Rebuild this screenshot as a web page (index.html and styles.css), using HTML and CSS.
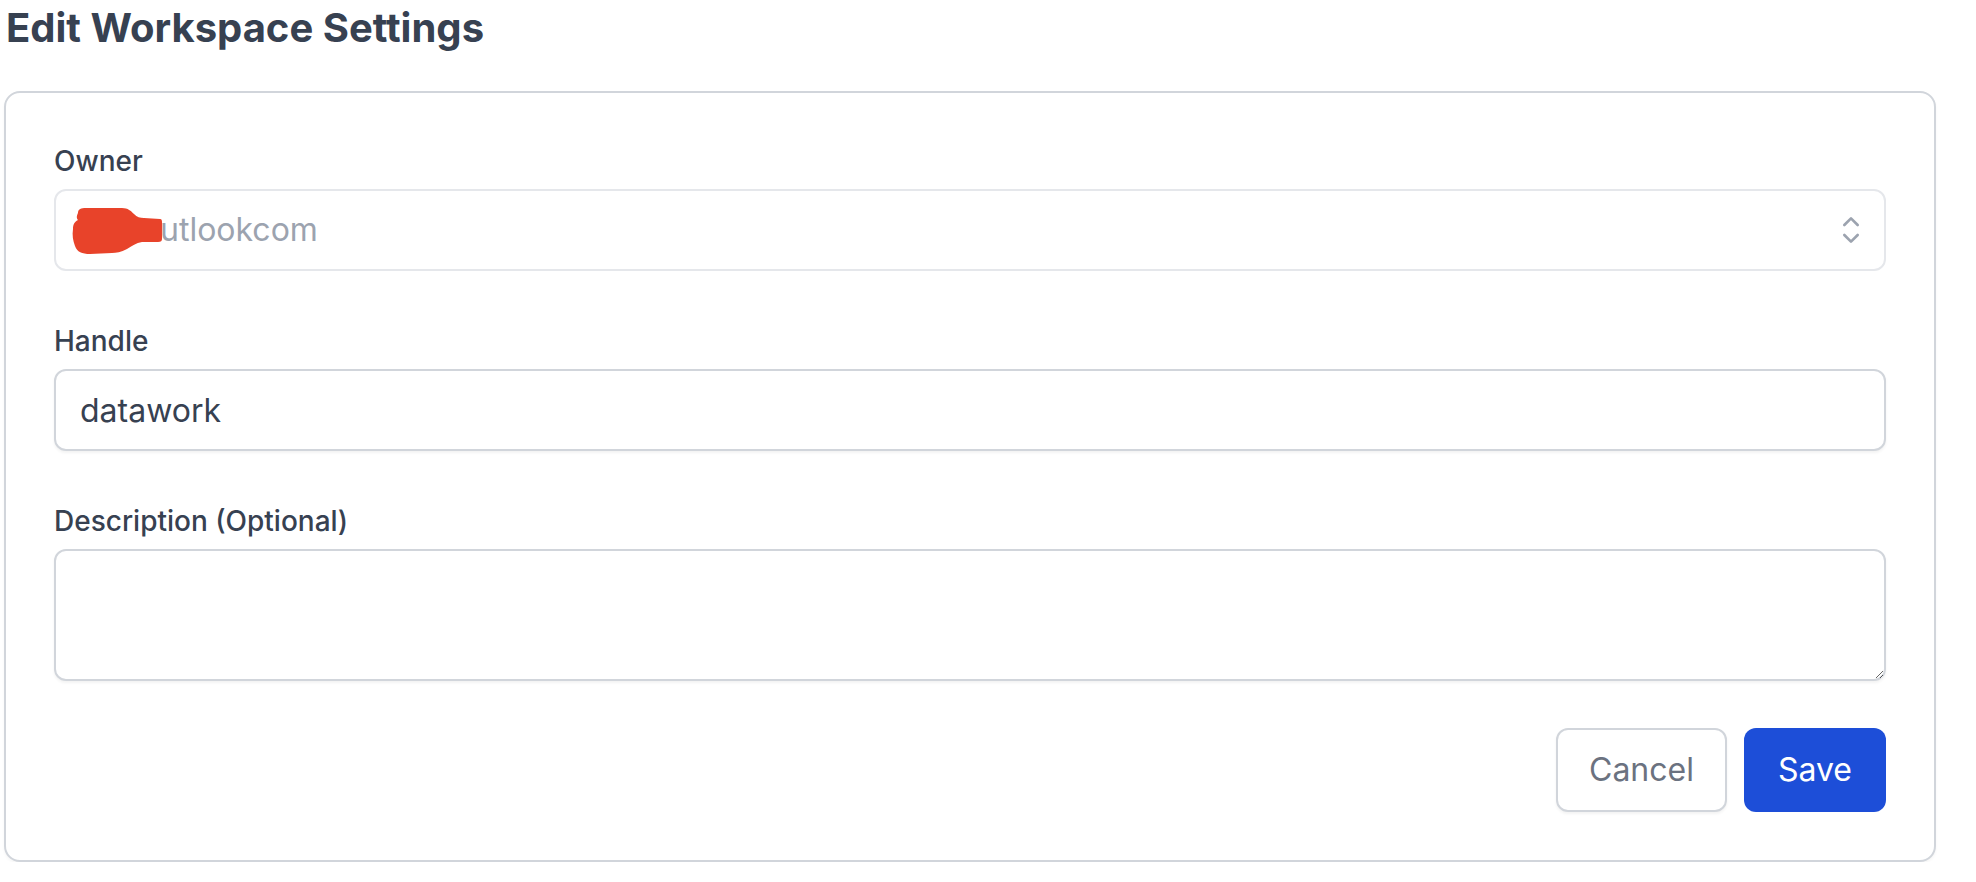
FILE: index.html
```html
<!DOCTYPE html>
<html lang="en">
<head>
<meta charset="utf-8">
<title>Edit Workspace Settings</title>
<link rel="stylesheet" href="styles.css">
</head>
<body>
<div class="page">
  <h1 class="title">Edit Workspace Settings</h1>
  <form class="card">
    <div class="field">
      <label class="label">Owner</label>
      <div class="select">
        <span class="select-value">
          <svg class="scribble" width="90" height="48" viewBox="0 0 90 48">
            <path d="M6 6 C6 2 9 1 14 1 L50 1 C56 1 59 4 62 7 C65 10 68 11 72 11 L88 12 C90 12 90 14 90 16 L90 32 C90 34 89 35 86 35 L70 35 C64 36 60 39 55 42 C49 45 44 46 40 46 L18 47 C10 47 5 45 3 39 C1 34 0 28 1 22 C1 18 2 15 6 13 C4 11 5 8 6 6 Z" fill="#e8432a"/>
          </svg>
          <span class="select-text">utlookcom</span>
        </span>
        <svg class="chevrons" width="40" height="40" viewBox="0 0 24 24" fill="none" stroke="currentColor" stroke-width="1.6" stroke-linecap="round" stroke-linejoin="round">
          <path d="M8 9l4-4 4 4"/>
          <path d="M16 15l-4 4-4-4"/>
        </svg>
      </div>
    </div>
    <div class="field">
      <label class="label" for="handle">Handle</label>
      <input class="input" id="handle" type="text" value="datawork">
    </div>
    <div class="field">
      <label class="label" for="desc">Description (Optional)</label>
      <textarea class="input textarea" id="desc" rows="2"></textarea>
    </div>
    <div class="actions">
      <button type="button" class="btn btn-cancel">Cancel</button>
      <button type="button" class="btn btn-save">Save</button>
    </div>
  </form>
</div>
</body>
</html>
```
FILE: styles.css
```css
html, body {
  margin: 0;
  padding: 0;
  background: #ffffff;
}
body {
  font-family: Inter, "Noto Sans", "Liberation Sans", sans-serif;
  color: #374151;
}
.page {
  padding: 0 40px 0 4px;
}
.title {
  margin: 0 0 35px 0;
  padding-left: 2px;
  font-size: 40px;
  line-height: 56px;
  font-weight: 700;
  color: #374151;
}
.card {
  display: flex;
  flex-direction: column;
  border: 2px solid #d1d5db;
  border-radius: 16px;
  padding: 48px 48px 48px 48px;
  background: #fff;
  box-shadow: 0 2px 3px rgba(0,0,0,0.04);
}
.field {
  display: flex;
  flex-direction: column;
  gap: 8px;
  margin-bottom: 50px;
}
.field:nth-of-type(3) {
  margin-bottom: 47px;
}
.label {
  font-size: 28px;
  line-height: 40px;
  font-weight: 500;
  color: #374151;
}
.select {
  display: flex;
  align-items: center;
  justify-content: space-between;
  height: 82px;
  box-sizing: border-box;
  border: 2px solid #e5e7eb;
  border-radius: 12px;
  padding: 0 13px 0 16px;
  background: #fff;
}
.select-value {
  display: flex;
  align-items: center;
}
.scribble {
  display: block;
  margin-top: 2px;
  margin-right: -2px;
}
.select-text {
  font-size: 32px;
  line-height: 48px;
  color: #9ca3af;
}
.chevrons {
  display: block;
  color: #9ca3af;
}
.input {
  display: block;
  box-sizing: border-box;
  width: 100%;
  height: 82px;
  margin: 0;
  border: 2px solid #d1d5db;
  border-radius: 12px;
  padding: 16px 24px;
  font-family: Inter, "Noto Sans", "Liberation Sans", sans-serif;
  font-size: 32px;
  line-height: 48px;
  color: #374151;
  background: #fff;
  box-shadow: 0 2px 3px rgba(0,0,0,0.05);
  outline: none;
}
.textarea {
  height: 132px;
  resize: both;
}
.actions {
  display: flex;
  justify-content: flex-end;
  gap: 17px;
}
.btn {
  box-sizing: border-box;
  height: 84px;
  border: 2px solid transparent;
  border-radius: 12px;
  padding: 0 31px;
  font-family: Inter, "Noto Sans", "Liberation Sans", sans-serif;
  font-size: 32px;
  line-height: 48px;
  font-weight: 400;
  cursor: pointer;
}
.btn-cancel {
  background: #fff;
  border-color: #d1d5db;
  color: #6b7280;
  box-shadow: 0 2px 3px rgba(0,0,0,0.05);
}
.btn-save {
  background: #1d4ed8;
  color: #ffffff;
  padding: 0 32px;
}
```
